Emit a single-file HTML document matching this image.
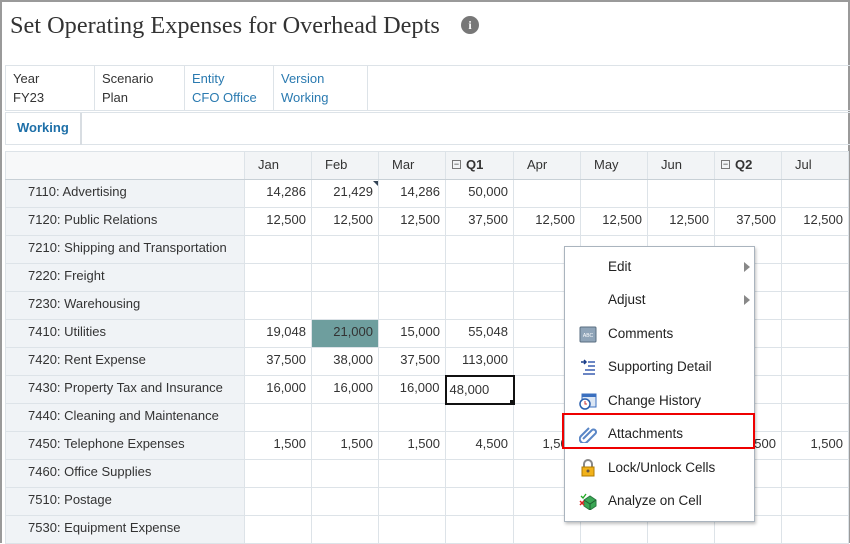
<!DOCTYPE html>
<html><head><meta charset="utf-8"><style>
*{margin:0;padding:0;box-sizing:border-box}
body{width:850px;height:543px;overflow:hidden;background:#fff;font-family:"Liberation Sans",Arial,sans-serif;position:relative}
.frame{position:absolute;left:0;top:0;width:850px;height:543px;border:2px solid #9a9a9a;border-bottom:none}
h1{position:absolute;left:10px;top:12px;font-family:"Liberation Serif",serif;font-weight:normal;font-size:24.3px;color:#333;white-space:nowrap}
.info{position:absolute;left:461px;top:16px;width:18px;height:18px;border-radius:50%;background:#777;color:#fff;font:bold 12px "Liberation Serif",serif;text-align:center;line-height:18px}
.pov{position:absolute;left:5px;top:65px;width:845px;height:46px;border:1px solid #dde3e8;border-right:none}
.pov div{position:absolute;top:0;height:44px;border-right:1px solid #dde3e8;padding:3px 0 0 7px;font-size:13px;line-height:19px;color:#333}
.pov .b{color:#2a7ab0}
.tabs{position:absolute;left:5px;top:112px;width:845px;height:33px;border:1px solid #dde3e8;border-right:none}
.tab{position:absolute;left:0;top:0;width:76px;height:32px;border-right:2px solid #d8dde2;color:#1d6fa8;font-weight:bold;font-size:13px;padding:7px 0 0 11px}
table{position:absolute;left:5px;top:151px;border-collapse:collapse;table-layout:fixed;font-size:13px;color:#333}
td{border:1px solid #dde3e8;height:28px;padding:0 5px;text-align:right;white-space:nowrap;overflow:hidden;line-height:22px;vertical-align:top;padding-top:1px}
tr.h td{height:28px;background:#f2f4f6;text-align:left;padding-left:13px;border-bottom:1px solid #c8d0d6;padding-top:2px}
td.l{text-align:left;background:#f0f3f6;padding-left:22px}
td.sel{background:#6e9e9e}
td.ed{border:2px solid #111;text-align:left;padding-left:3px;padding-top:2px}
.mn{display:inline-block;width:9px;height:9px;border:1px solid #777;font-size:9px;line-height:6px;text-align:center;margin-right:5px;vertical-align:2px}
.menu{position:absolute;left:564px;top:246px;width:191px;height:276px;background:#fff;border:1px solid #aab4be;box-shadow:1px 2px 3px rgba(0,0,0,.25)}
.mi{position:absolute;left:0;width:190px;height:33px;font-size:13.5px;color:#222;padding:9px 0 0 43px}
.arr{position:absolute;right:5px;top:12px;width:0;height:0;border-left:6px solid #888;border-top:5px solid transparent;border-bottom:5px solid transparent}
.ic{position:absolute;left:14px;top:8px;width:18px;height:18px}
.red{position:absolute;left:562px;top:413px;width:193px;height:36px;border:2px solid #e00}
</style></head><body>
<div class="frame"></div>
<h1>Set Operating Expenses for Overhead Depts</h1>
<div class="info">i</div>
<div class="pov">
<div style="left:0;width:89px">Year<br>FY23</div>
<div style="left:89px;width:90px">Scenario<br>Plan</div>
<div style="left:179px;width:89px" class="b">Entity<br>CFO Office</div>
<div style="left:268px;width:94px" class="b">Version<br>Working</div>
</div>
<div class="tabs"><div class="tab">Working</div></div>
<table>
<colgroup><col style="width:239px"><col style="width:67px"><col style="width:67px"><col style="width:67px"><col style="width:68px"><col style="width:67px"><col style="width:67px"><col style="width:67px"><col style="width:67px"><col style="width:67px"></colgroup>
<tr class="h"><td style="background:#f7f8f9"></td><td>Jan</td><td>Feb</td><td>Mar</td><td style="padding-left:6px"><span class="mn">−</span><b>Q1</b></td><td>Apr</td><td>May</td><td>Jun</td><td style="padding-left:6px"><span class="mn">−</span><b>Q2</b></td><td>Jul</td></tr>
<tr><td class="l">7110: Advertising</td><td>14,286</td><td>21,429</td><td>14,286</td><td>50,000</td><td></td><td></td><td></td><td></td><td></td></tr>
<tr><td class="l">7120: Public Relations</td><td>12,500</td><td>12,500</td><td>12,500</td><td>37,500</td><td>12,500</td><td>12,500</td><td>12,500</td><td>37,500</td><td>12,500</td></tr>
<tr><td class="l">7210: Shipping and Transportation</td><td></td><td></td><td></td><td></td><td></td><td></td><td></td><td></td><td></td></tr>
<tr><td class="l">7220: Freight</td><td></td><td></td><td></td><td></td><td></td><td></td><td></td><td></td><td></td></tr>
<tr><td class="l">7230: Warehousing</td><td></td><td></td><td></td><td></td><td></td><td></td><td></td><td></td><td></td></tr>
<tr><td class="l">7410: Utilities</td><td>19,048</td><td class="sel">21,000</td><td>15,000</td><td>55,048</td><td></td><td></td><td></td><td></td><td></td></tr>
<tr><td class="l">7420: Rent Expense</td><td>37,500</td><td>38,000</td><td>37,500</td><td>113,000</td><td></td><td></td><td></td><td></td><td></td></tr>
<tr><td class="l">7430: Property Tax and Insurance</td><td>16,000</td><td>16,000</td><td>16,000</td><td class="ed">48,000</td><td></td><td></td><td></td><td></td><td></td></tr>
<tr><td class="l">7440: Cleaning and Maintenance</td><td></td><td></td><td></td><td></td><td></td><td></td><td></td><td></td><td></td></tr>
<tr><td class="l">7450: Telephone Expenses</td><td>1,500</td><td>1,500</td><td>1,500</td><td>4,500</td><td>1,500</td><td></td><td></td><td>4,500</td><td>1,500</td></tr>
<tr><td class="l">7460: Office Supplies</td><td></td><td></td><td></td><td></td><td></td><td></td><td></td><td></td><td></td></tr>
<tr><td class="l">7510: Postage</td><td></td><td></td><td></td><td></td><td></td><td></td><td></td><td></td><td></td></tr>
<tr><td class="l">7530: Equipment Expense</td><td></td><td></td><td></td><td></td><td></td><td></td><td></td><td></td><td></td></tr>
</table>
<div style="position:absolute;left:373px;top:181px;width:0;height:0;border-top:5px solid #345;border-left:5px solid transparent"></div>
<div style="position:absolute;left:510px;top:400px;width:5px;height:5px;background:#111"></div>
<div class="menu">
<div class="mi" style="top:3px">Edit<span class="arr"></span></div>
<div class="mi" style="top:36px">Adjust<span class="arr"></span></div>
<div class="mi" style="top:70px"><svg class="ic" viewBox="0 0 18 18"><rect x="1" y="2" width="16" height="15" rx="1" fill="#8fa4b8" stroke="#5a6e80"/><text x="9" y="12" font-size="5" text-anchor="middle" fill="#fff">ABC</text></svg>Comments</div>
<div class="mi" style="top:103px"><svg class="ic" viewBox="0 0 18 18"><path d="M2 4h5M5 2l2 2-2 2" stroke="#1a3e8a" stroke-width="1.5" fill="none"/><path d="M9 4h7M9 8h7M6 12h10M4 16h12" stroke="#3a5fb0" stroke-width="1.6"/></svg>Supporting Detail</div>
<div class="mi" style="top:137px"><svg class="ic" viewBox="0 0 18 18"><rect x="3" y="2" width="14" height="13" fill="#dbe6f4" stroke="#3a6fbf"/><rect x="3" y="2" width="14" height="3" fill="#3a6fbf"/><circle cx="6" cy="12" r="5" fill="#fff" stroke="#2a5fae" stroke-width="1.5"/><path d="M6 9v3h2" stroke="#c33" fill="none"/></svg>Change History</div>
<div class="mi" style="top:170px"><svg class="ic" viewBox="0 0 18 18"><path d="M4 14L13 5a2.5 2.5 0 0 1 3.5 3.5L8 17a4 4 0 0 1-6-6l8-8" stroke="#5a86c6" stroke-width="2" fill="none"/></svg>Attachments</div>
<div class="mi" style="top:204px"><svg class="ic" viewBox="0 0 18 18"><path d="M5 8V5a4 4 0 0 1 8 0v3" stroke="#888" stroke-width="2" fill="none"/><rect x="3" y="8" width="12" height="9" fill="#f2b21a" stroke="#b07a00"/><circle cx="9" cy="12" r="1.5" fill="#654"/></svg>Lock/Unlock Cells</div>
<div class="mi" style="top:237px"><svg class="ic" viewBox="0 0 18 18"><path d="M5 8l6-4 6 4v6l-6 4-6-4z" fill="#3aa855" stroke="#2a7a40"/><path d="M5 8l6 4 6-4M11 12v6" stroke="#1f5e30" fill="none"/><path d="M1 9l4 4M5 9l-4 4" stroke="#d22" stroke-width="1.5"/><path d="M2 4l2 2 3-4" stroke="#2a2" stroke-width="1.3" fill="none"/></svg>Analyze on Cell</div>
</div>
<div class="red"></div>
</body></html>
